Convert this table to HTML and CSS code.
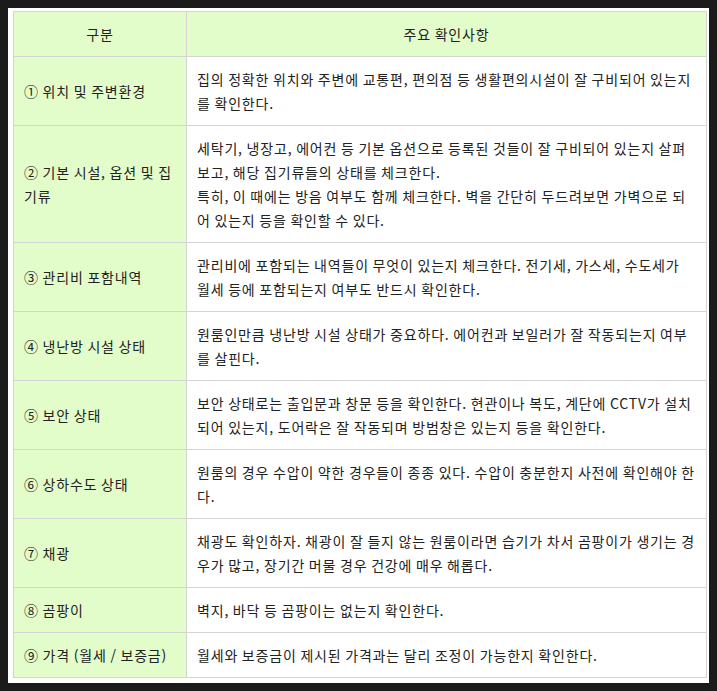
FILE: index.html
```html
<!DOCTYPE html>
<html lang="ko">
<head>
<meta charset="utf-8">
<title>확인사항</title>
<link rel="stylesheet" href="styles.css">
</head>
<body>
<div class="sheet">
<table class="check">
<colgroup><col class="c1"><col class="c2"></colgroup>
<thead>
<tr><th>구분</th><th>주요 확인사항</th></tr>
</thead>
<tbody>
<tr><td class="k">① 위치 및 주변환경</td><td>집의 정확한 위치와 주변에 교통편, 편의점 등 생활편의시설이 잘 구비되어 있는지를 확인한다.</td></tr>
<tr><td class="k">② 기본 시설, 옵션 및 집기류</td><td>세탁기, 냉장고, 에어컨 등 기본 옵션으로 등록된 것들이 잘 구비되어 있는지 살펴보고, 해당 집기류들의 상태를 체크한다.<br>특히, 이 때에는 방음 여부도 함께 체크한다. 벽을 간단히 두드려보면 가벽으로 되어 있는지 등을 확인할 수 있다.</td></tr>
<tr><td class="k">③ 관리비 포함내역</td><td>관리비에 포함되는 내역들이 무엇이 있는지 체크한다. 전기세, 가스세, 수도세가 월세 등에 포함되는지 여부도 반드시 확인한다.</td></tr>
<tr><td class="k">④ 냉난방 시설 상태</td><td>원룸인만큼 냉난방 시설 상태가 중요하다. 에어컨과 보일러가 잘 작동되는지 여부를 살핀다.</td></tr>
<tr><td class="k">⑤ 보안 상태</td><td>보안 상태로는 출입문과 창문 등을 확인한다. 현관이나 복도, 계단에 CCTV가 설치되어 있는지, 도어락은 잘 작동되며 방범창은 있는지 등을 확인한다.</td></tr>
<tr><td class="k">⑥ 상하수도 상태</td><td>원룸의 경우 수압이 약한 경우들이 종종 있다. 수압이 충분한지 사전에 확인해야 한다.</td></tr>
<tr><td class="k">⑦ 채광</td><td>채광도 확인하자. 채광이 잘 들지 않는 원룸이라면 습기가 차서 곰팡이가 생기는 경우가 많고, 장기간 머물 경우 건강에 매우 해롭다.</td></tr>
<tr><td class="k">⑧ 곰팡이</td><td>벽지, 바닥 등 곰팡이는 없는지 확인한다.</td></tr>
<tr><td class="k">⑨ 가격 (월세 / 보증금)</td><td>월세와 보증금이 제시된 가격과는 달리 조정이 가능한지 확인한다.</td></tr>
</tbody>
</table>
</div>
</body>
</html>
```
FILE: styles.css
```css
html, body {
  margin: 0;
  padding: 0;
}
body {
  background: #1b1b1b;
  padding: 8px;
  height: 691px;
  box-sizing: border-box;
  font-family: "Noto Sans CJK KR", "Noto Sans", sans-serif;
  font-size: 14px;
  letter-spacing: 0.82px;
  word-spacing: -1px;
  color: #222;
}
.sheet {
  background: #ffffff;
  height: 100%;
  box-sizing: border-box;
  padding: 3px 3px 6px 5px;
}
.check {
  border-collapse: collapse;
  width: 693px;
  table-layout: fixed;
}
.c1 { width: 173px; }
.c2 { width: 520px; }
.check th,
.check td {
  border: 1px solid #d4d4d4;
  padding: 10px 10px;
  line-height: 24px;
  vertical-align: middle;
  text-align: left;
  word-break: break-all;
}
.check th {
  background: #e2fcca;
  font-weight: normal;
  text-align: center;
}
.check td.k {
  background: #e2fcca;
}
```
